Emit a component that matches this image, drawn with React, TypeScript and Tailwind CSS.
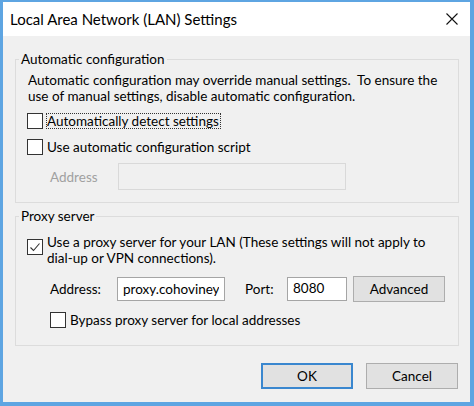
import React from "react";

const FONT = "font-['Lato',sans-serif]";

function Checkbox({ checked = false }: { checked?: boolean }) {
  return (
    <span className="w-4 h-4 shrink-0 border border-[#333333] bg-white flex items-center justify-center">
      {checked && (
        <svg width="14" height="14" viewBox="0 0 14 14" fill="none">
          <path d="M2.5 7.5 L5.5 10.5 L11.5 3.5" stroke="#333333" strokeWidth="1.1" />
        </svg>
      )}
    </span>
  );
}

function Button({ label, primary = false }: { label: string; primary?: boolean }) {
  return (
    <button
      className={
        primary
          ? "w-[92px] h-[26px] bg-[#e1e1e1] border border-[#3a87cf] outline outline-1 outline-[#3a87cf] -outline-offset-2 text-[13.5px] text-black"
          : "w-[92px] h-[26px] bg-[#e1e1e1] border border-[#adadad] text-[13.5px] text-black"
      }
    >
      {label}
    </button>
  );
}

export default function App() {
  return (
    <div
      className={`w-[474px] h-[406px] flex flex-col bg-[#f0f0f0] border-t-2 border-l-[3px] border-r-4 border-b-4 border-[#5ea5e2] text-black ${FONT}`}
    >
      {/* Title bar */}
      <div className="h-[34px] shrink-0 bg-white flex items-center justify-between pl-[7px] pr-[12px]">
        <span className="text-[15px]">Local Area Network (LAN) Settings</span>
        <svg width="12" height="12" viewBox="0 0 12 12">
          <path d="M0.5 0.5 L11.5 11.5 M11.5 0.5 L0.5 11.5" stroke="#111111" strokeWidth="1.1" />
        </svg>
      </div>

      {/* Body */}
      <div className="flex-1 flex flex-col pl-[12px] pr-[11px] pt-[15px] text-[13.5px] leading-4 whitespace-nowrap">
        <fieldset className="border border-[#dcdcdc] pl-[11px] pr-3 pb-3">
          <legend className="-ml-[8px] px-[2px] leading-4">Automatic configuration</legend>
          <p className="pl-px mt-[5px]">
            Automatic configuration may override manual settings.&nbsp; To ensure the
            <br />
            use of manual settings, disable automatic configuration.
          </p>
          <div className="flex items-center gap-[3px] mt-[9px]">
            <Checkbox />
            <span className="border border-dotted border-[#333333] h-4 leading-[14px] pr-px">Automatically detect settings</span>
          </div>
          <div className="flex items-center gap-1 mt-[10px]">
            <Checkbox />
            <span>Use automatic configuration script</span>
          </div>
          <div className="flex items-center mt-2 pl-[23px]">
            <span className="w-[68px] text-[#a0a0a0]">Address</span>
            <div className="w-[228px] h-[27px] border border-[#d9d9d9] bg-[#f0f0f0]" />
          </div>
        </fieldset>

        <fieldset className="border border-[#dcdcdc] pl-[11px] pr-3 pb-[17px] mt-[5px]">
          <legend className="-ml-[8px] px-[2px] leading-4">Proxy server</legend>
          <div className="flex items-start gap-1 mt-[10px]">
            <span className="mt-[5px]">
              <Checkbox checked />
            </span>
            <span>
              Use a proxy server for your LAN (These settings will not apply to
              <br />
              dial-up or VPN connections).
            </span>
          </div>
          <div className="flex items-center mt-[10px] pl-[23px]">
            <span className="w-[67px]">Address:</span>
            <input
              readOnly
              value="proxy.cohovineyard.com"
              className="w-[108px] h-[24px] border border-[#a5a5a5] bg-white px-[5px] text-[13.5px] outline-none"
            />
            <span className="w-[62px] pl-5">Port:</span>
            <input
              readOnly
              value="8080"
              className="w-[60px] h-[24px] border border-[#a5a5a5] bg-white px-[5px] pb-[2px] text-[13.5px] outline-none"
            />
            <span className="ml-[6px]">
              <Button label="Advanced" />
            </span>
          </div>
          <div className="flex items-center gap-1 mt-[10px] pl-[23px]">
            <Checkbox />
            <span>Bypass proxy server for local addresses</span>
          </div>
        </fieldset>

        <div className="flex justify-end gap-[13px] mt-[17px] pr-px">
          <Button label="OK" primary />
          <Button label="Cancel" />
        </div>
      </div>
    </div>
  );
}
